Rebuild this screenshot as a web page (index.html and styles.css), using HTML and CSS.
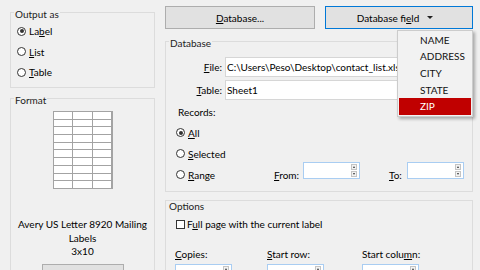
FILE: index.html
```html
<!DOCTYPE html>
<html>
<head>
<meta charset="utf-8">
<link rel="stylesheet" href="styles.css">
</head>
<body>
<div class="app">
  <div class="left">
    <div class="group g-output">
      <div class="legend">Output as</div>
      <div class="radios">
        <div class="rrow"><span class="radio on"></span><span>La<u>b</u>el</span></div>
        <div class="rrow"><span class="radio"></span><span><u>L</u>ist</span></div>
        <div class="rrow"><span class="radio"></span><span><u>T</u>able</span></div>
      </div>
    </div>
    <div class="group g-format">
      <div class="legend">Format</div>
      <div class="sheet">
        <i></i><i></i><i></i><i></i><i></i><i></i><i></i><i></i><i></i><i></i>
        <i></i><i></i><i></i><i></i><i></i><i></i><i></i><i></i><i></i><i></i>
        <i></i><i></i><i></i><i></i><i></i><i></i><i></i><i></i><i></i><i></i>
      </div>
      <div class="desc">Avery US Letter 8920 Mailing<br>Labels<br>3x10</div>
      <div class="btn fmt-btn"></div>
    </div>
  </div>
  <div class="right">
    <div class="toprow">
      <div class="btn btn-db"><span><u>D</u>atabase...</span></div>
      <div class="fieldwrap">
        <div class="btn btn-field"><span>Database fi<u>e</u>ld</span><span class="caret"></span></div>
        <div class="menu">
          <div class="item">NAME</div>
          <div class="item">ADDRESS</div>
          <div class="item">CITY</div>
          <div class="item">STATE</div>
          <div class="item sel">ZIP</div>
        </div>
      </div>
    </div>
    <div class="group g-db">
      <div class="legend">Database</div>
      <div class="frow first"><span class="flabel"><u>F</u>ile:</span><div class="input">C:\Users\Peso\Desktop\contact_list.xlsx</div></div>
      <div class="frow"><span class="flabel"><u>T</u>able:</span><div class="input">Sheet1</div></div>
      <div class="records">Records:</div>
      <div class="dbradios">
        <div class="rrow"><span class="radio on"></span><span><u>A</u>ll</span></div>
        <div class="rrow"><span class="radio"></span><span><u>S</u>elected</span></div>
        <div class="rrow range">
          <div class="rlabel"><span class="radio"></span><span><u>R</u>ange</span></div>
          <span class="from"><u>F</u>rom:</span>
          <div class="spin up"><div class="arrows"><span class="a-up"></span><span class="a-dn"></span></div></div>
          <span class="to"><u>T</u>o:</span>
          <div class="spin up"><div class="arrows"><span class="a-up"></span><span class="a-dn"></span></div></div>
        </div>
      </div>
    </div>
    <div class="group g-opt">
      <div class="otitle">Options</div>
      <div class="crow"><span class="check"></span><span>F<u>u</u>ll page with the current label</span></div>
      <div class="ogrid">
        <span><u>C</u>opies:</span>
        <span><u>S</u>tart row:</span>
        <span>Start colu<u>m</u>n:</span>
        <div class="spin"><div class="arrows"><span class="a-up"></span><span class="a-dn"></span></div></div>
        <div class="spin"><div class="arrows"><span class="a-up"></span><span class="a-dn"></span></div></div>
        <div class="spin"><div class="arrows"><span class="a-up"></span><span class="a-dn"></span></div></div>
      </div>
    </div>
  </div>
</div>
</body>
</html>
```
FILE: styles.css
```css
* { box-sizing: border-box; }
body {
  margin: 0;
  width: 480px;
  height: 270px;
  overflow: hidden;
  background: #f0f0f0;
  font-family: Lato, "Segoe UI", sans-serif;
  font-size: 10px;
  color: #000;
}
u { text-decoration: underline; text-underline-offset: 1px; }
.app { display: flex; height: 270px; overflow: hidden; }
.left { width: 145px; margin-left: 10px; padding-top: 12px; }
.right { width: 308px; margin-left: 10px; padding-top: 6px; }

.group { border: 1px solid #dcdcdc; }
.legend {
  margin: -6px 0 0 3px;
  height: 14px;
  line-height: 14px;
  padding: 0 1px;
  width: fit-content;
  background: #f0f0f0;
  color: #222;
}

.g-output { height: 76px; }
.radios { padding-left: 6px; }
.rrow { height: 20.5px; display: flex; align-items: center; gap: 3px; }
.radio {
  width: 9px; height: 9px;
  border: 1px solid #333;
  border-radius: 50%;
  background: #fff;
  display: flex; align-items: center; justify-content: center;
  flex: none;
}
.radio.on::after {
  content: "";
  width: 4px; height: 4px;
  border-radius: 50%;
  background: #333;
}

.g-format { margin-top: 10px; height: 190px; }
.sheet {
  margin: 4px auto 0;
  width: 60px; height: 78px;
  display: grid;
  grid-template-columns: repeat(3, 1fr);
  grid-template-rows: repeat(10, 1fr);
  gap: 1px;
  background: #a3a3a3;
  border: 1px solid #a3a3a3;
}
.sheet i { background: #fff; }
.desc { margin-top: 29px; text-align: center; line-height: 13.5px; }
.fmt-btn { margin: 5.5px auto 0; width: 82px; height: 23px; }

.btn {
  background: #e1e1e1;
  border: 1px solid #adadad;
  display: flex; align-items: center; justify-content: center;
}
.toprow { display: flex; gap: 10px; height: 23px; }
.btn-db { width: 150px; }
.fieldwrap { width: 148px; position: relative; }
.btn-field { width: 100%; height: 100%; border-color: #0078d7; gap: 8px; padding-right: 8px; }
.caret {
  width: 0; height: 0;
  border-left: 3px solid transparent;
  border-right: 3px solid transparent;
  border-top: 3.5px solid #222;
}
.menu {
  position: absolute;
  left: 72px; top: 23.5px;
  width: 76px;
  background: #f2f2f2;
  border: 1px solid #cccccc;
  box-shadow: 2px 2px 3px rgba(0,0,0,0.3);
  padding: 1px 1px 1px;
  z-index: 5;
}
.item { height: 16.7px; line-height: 16.7px; padding-left: 21px; color: #111; }
.item.sel { background: #c00000; color: #fff; }

.g-db { margin-top: 12px; height: 151px; }
.frow { display: flex; align-items: center; height: 20px; margin-top: 3px; }
.frow.first { margin-top: 7px; }
.flabel { width: 56px; text-align: right; }
.input {
  margin-left: 3px;
  width: 240px; height: 20px;
  line-height: 18px;
  background: #fff;
  border: 1px solid #d6d6d6;
  padding-left: 1px;
  white-space: nowrap;
  overflow: hidden;
}
.records { margin-top: 5px; line-height: 14px; padding-left: 12px; }
.dbradios { margin-top: 3px; padding-left: 10px; }
.dbradios .rrow { height: 21px; }
.rlabel { width: 98px; display: flex; align-items: center; gap: 3px; }
.range { gap: 0; }
.from { width: 29px; }
.to { width: 18px; margin-left: 29px; }
.spin {
  width: 57px; height: 17px;
  background: #fff;
  border: 1px solid #a9cdf2;
  display: flex; align-items: center; justify-content: flex-end;
  padding-right: 2px;
}
.spin.up { margin-bottom: 8px; }
.arrows { display: flex; flex-direction: column; gap: 1px; }
.arrows span {
  width: 6px; height: 6px;
  background: #f2f2f2;
  border: 1px solid #c4c4c4;
  display: flex; align-items: center; justify-content: center;
}
.arrows .a-up::after {
  content: ""; width: 0; height: 0;
  border-left: 1.5px solid transparent; border-right: 1.5px solid transparent;
  border-bottom: 2px solid #333;
}
.arrows .a-dn::after {
  content: ""; width: 0; height: 0;
  border-left: 1.5px solid transparent; border-right: 1.5px solid transparent;
  border-top: 2px solid #333;
}

.g-opt { margin-top: 8px; height: 90px; }
.otitle { margin: -2px 0 0 3px; line-height: 14px; color: #222; }
.crow { margin-top: 1px; height: 20px; display: flex; align-items: center; gap: 2px; padding-left: 10px; }
.check { width: 9px; height: 9px; border: 1px solid #333; background: #fff; }
.ogrid {
  margin-top: 13px;
  padding-left: 9px;
  display: grid;
  grid-template-columns: 92px 95px auto;
  grid-template-rows: 14px 17px;
  row-gap: 3px;
  line-height: 14px;
}
```
